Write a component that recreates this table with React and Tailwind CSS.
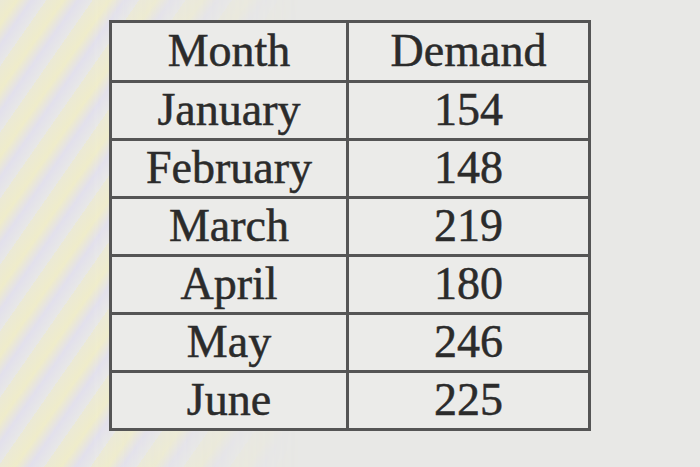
import React from "react";

const rows = [
  ["January", "154"],
  ["February", "148"],
  ["March", "219"],
  ["April", "180"],
  ["May", "246"],
  ["June", "225"],
];

export default function App() {
  return (
    <div className="w-[700px] h-[467px] overflow-hidden bg-[#e8e8e6] relative">
      <div className="absolute inset-0 w-[300px] bg-[repeating-linear-gradient(125deg,#ebe9d6_0px,#efecca_14px,#e2e0ec_26px,#e8e8e6_38px)] [mask-image:linear-gradient(to_right,black_30%,transparent_100%)]" />
      <div className="relative pl-[109px] pt-[20px]">
        <table
          className="border-collapse text-[#2b2b2b] bg-[#ebebe9] [-webkit-text-stroke:0.5px_#2b2b2b]"
          style={{ fontFamily: '"Liberation Serif", "DejaVu Serif", serif' }}
        >
          <tbody>
            <tr className="h-[60px]">
              <td className="w-[237px] border-[3px] border-[#555] text-center text-[46px] leading-none pb-[1px]">Month</td>
              <td className="w-[242px] border-[3px] border-[#555] text-center text-[46px] leading-none pb-[1px]">Demand</td>
            </tr>
            {rows.map(([m, d]) => (
              <tr key={m} className="h-[58px]">
                <td className="border-[3px] border-[#555] text-center text-[46px] leading-none pb-[2px]">{m}</td>
                <td className="border-[3px] border-[#555] text-center text-[46px] leading-none pb-[2px]">{d}</td>
              </tr>
            ))}
          </tbody>
        </table>
      </div>
    </div>
  );
}
